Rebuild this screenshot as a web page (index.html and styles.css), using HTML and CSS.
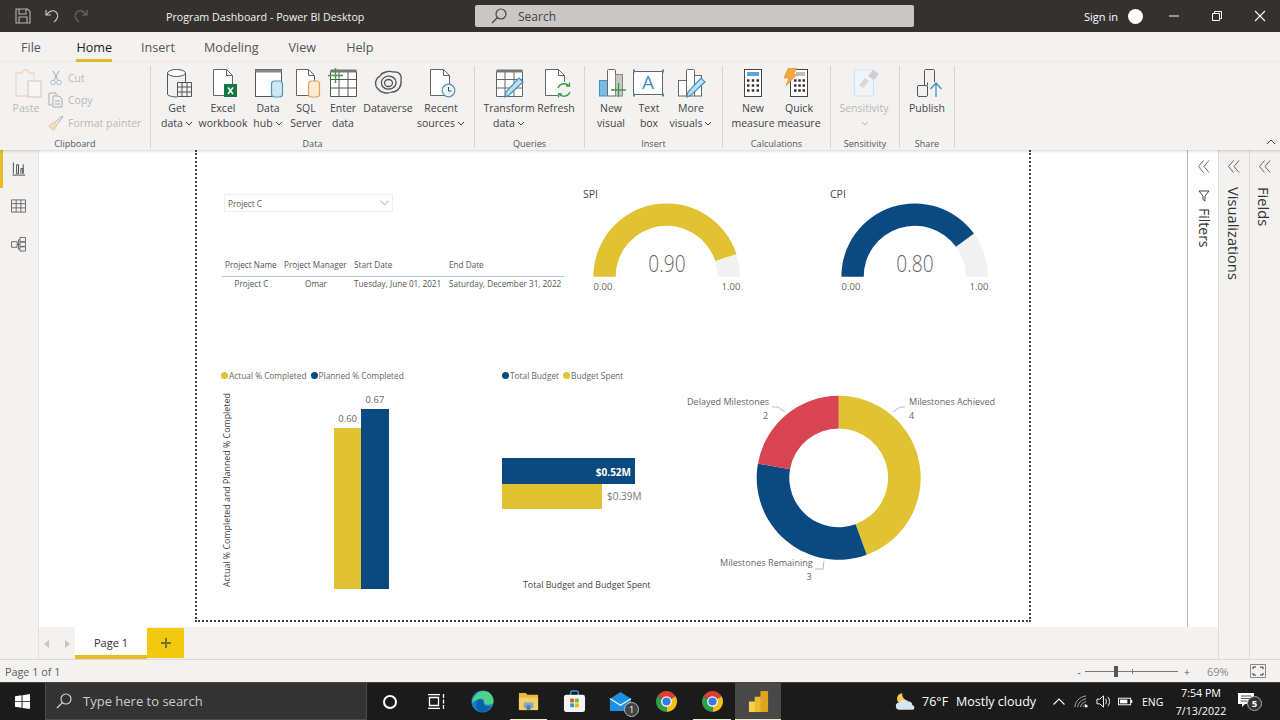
FILE: index.html
```html
<!DOCTYPE html>
<html lang="en">
<head>
<meta charset="utf-8">
<title>Program Dashboard - Power BI Desktop</title>
<link rel="stylesheet" href="styles.css">
</head>
<body>
<div class="app">
  <header class="titlebar">
    <div class="qat">
      <svg class="qicon" viewBox="0 0 16 16"><path d="M1 1h11.5L15 3.5V15H1zM4 1v5h7V1M4 15V9h8v6" fill="none" stroke="#b5b4b2" stroke-width="1.1"/></svg>
      <svg class="qicon" viewBox="0 0 16 16"><path d="M2 2v5h5M2.5 7C5 3 9 1.500 12 4c3 2.800 2 7-2 10" fill="none" stroke="#c8c7c5" stroke-width="1.200"/></svg>
      <svg class="qicon" viewBox="0 0 16 16"><path d="M14 2v5H9M13.500 7C11 3 7 1.500 4 4c-3 2.800-2 7 2 10" fill="none" stroke="#6c6b69" stroke-width="1.200"/></svg>
    </div>
    <div class="doc-title">Program Dashboard - Power BI Desktop</div>
    <div class="search">
      <svg class="search-ic" viewBox="0 0 16 16"><circle cx="10" cy="6" r="5" fill="none" stroke="#444" stroke-width="1.200"/><path d="M6.500 9.500L1 15" stroke="#444" stroke-width="1.200"/></svg>
      <span>Search</span>
    </div>
    <div class="account"><span>Sign in</span><i class="avatar"></i></div>
    <div class="winbtns">
      <svg class="wb" viewBox="0 0 12 12"><path d="M1 6h10" stroke="#fff"/></svg>
      <svg class="wb" viewBox="0 0 12 12"><path d="M1.500 3.500h7v7h-7zM3.500 3.500v-2h7v7h-2" fill="none" stroke="#fff"/></svg>
      <svg class="wb" viewBox="0 0 12 12"><path d="M1 1l10 10M11 1L1 11" stroke="#fff" stroke-width="1.100"/></svg>
    </div>
  </header>

  <nav class="tabs">
    <span class="tab">File</span>
    <span class="tab active">Home</span>
    <span class="tab">Insert</span>
    <span class="tab">Modeling</span>
    <span class="tab">View</span>
    <span class="tab">Help</span>
  </nav>

  <section class="ribbon">
    <div class="group g-clip">
      <div class="btns">
        <div class="rb w34 off">
          <svg class="ic" viewBox="0 0 34 30"><path d="M7 5h6l2-3h3l2 3h5v7M19 28H7V5" fill="none" stroke="#f0d8bd" stroke-width="1.300"/><rect x="19" y="13" width="13" height="16" fill="#f7f6f5" stroke="#c9c8c6"/></svg>
          <span>Paste</span>
        </div>
        <div class="small-list off">
          <div class="si"><svg class="sic" viewBox="0 0 16 16"><path d="M5 1l5 9M11 1L6 10" stroke="#aaa" fill="none"/><circle cx="5" cy="12.500" r="2.300" fill="none" stroke="#a8c4da"/><circle cx="11" cy="12.500" r="2.300" fill="none" stroke="#a8c4da"/></svg><span>Cut</span></div>
          <div class="si"><svg class="sic" viewBox="0 0 16 16"><path d="M1 1h7v2M1 1v12h3" fill="none" stroke="#aaa"/><path d="M5 4h6l3 3v8H5zM7 9h5M7 12h5" fill="none" stroke="#aaa"/></svg><span>Copy</span></div>
          <div class="si"><svg class="sic" viewBox="0 0 16 16"><path d="M1 11l5-4 3 3-3 5c-2 0-4-2-5-4z" fill="#f3dcc0" stroke="#e4c7a4"/><path d="M7 7l7-6 1 1-6 7" fill="none" stroke="#aaa"/></svg><span>Format painter</span></div>
        </div>
      </div>
      <div class="glabel">Clipboard</div>
    </div>

    <div class="group g-data">
      <div class="btns">
        <div class="rb w46">
          <svg class="ic" viewBox="0 0 34 30"><ellipse cx="16.500" cy="5" rx="9" ry="3.500" fill="#fff" stroke="#555"/><path d="M7.500 5v21c0 1.500 4 3 9.500 3M25.500 5v9" fill="none" stroke="#555"/><path d="M17.500 14.500h14v14h-14zM17.500 19h14M17.500 24h14M22 14.500v14M27 14.500v14" fill="#f3f2f1" stroke="#555"/></svg>
          <span>Get</span><span>data<svg class="chev" viewBox="0 0 8 5"><path d="M1 1l3 3 3-3" fill="none" stroke="#444"/></svg></span>
        </div>
        <div class="rb w46">
          <svg class="ic" viewBox="0 0 34 30"><path d="M7.500 1.500h13l6 6v20h-19z" fill="#fff" stroke="#666"/><path d="M20.500 1.500v6h6" fill="none" stroke="#666"/><rect x="18" y="16" width="13" height="13" fill="#117a43"/><path d="M22 19.500l5 6.500M27 19.500L22 26" stroke="#fff" stroke-width="1.500"/></svg>
          <span>Excel</span><span>workbook</span>
        </div>
        <div class="rb w44">
          <svg class="ic" viewBox="0 0 34 30"><rect x="4.500" y="1.500" width="26" height="27" fill="#fff" stroke="#555"/><rect x="4.500" y="1.500" width="26" height="3" fill="#888"/><rect x="20.500" y="13" width="11" height="16" rx="3" fill="#cfe6f3" stroke="#4e97bf" stroke-width="1.200"/></svg>
          <span>Data</span><span>hub<svg class="chev" viewBox="0 0 8 5"><path d="M1 1l3 3 3-3" fill="none" stroke="#444"/></svg></span>
        </div>
        <div class="rb w32">
          <svg class="ic" viewBox="0 0 34 30"><path d="M7.500 1.500h12l6 6v20h-18z" fill="#fff" stroke="#666"/><path d="M19.500 1.500v6h6" fill="none" stroke="#666"/><rect x="19.500" y="13" width="11" height="16" rx="3" fill="#fbe9d6" stroke="#e5a15c" stroke-width="1.200"/></svg>
          <span>SQL</span><span>Server</span>
        </div>
        <div class="rb w42">
          <svg class="ic" viewBox="0 0 34 30"><path d="M4.500 3.500h26v25h-26zM4.500 11.500h26M4.500 20h26M13 3.500v25M22 3.500v25" fill="#fff" stroke="#555"/><rect x="4.500" y="1.500" width="26" height="3" fill="#777"/><path d="M2 7.500h15M9.500 0v15" stroke="#3d9a4b" stroke-width="1.500"/></svg>
          <span>Enter</span><span>data</span>
        </div>
        <div class="rb w48">
          <svg class="ic" viewBox="0 0 34 30"><path d="M9 8c3-5 10-5 13-4 6-1 9 3 8 8 1 6-3 12-9 12-5 2-11 1-14-3-4-4-3-10 2-13z" fill="none" stroke="#555" stroke-width="1.300"/><path d="M11 12c3-5 10-5 13-1 3 5-1 10-6 10-5 1-9-4-7-9z" fill="none" stroke="#555" stroke-width="1.300"/><ellipse cx="17.500" cy="15" rx="4" ry="3.500" fill="none" stroke="#555" stroke-width="1.300"/></svg>
          <span>Dataverse</span>
        </div>
        <div class="rb w58">
          <svg class="ic" viewBox="0 0 34 30"><path d="M6.500 1.500h13l6 6v20h-19z" fill="#fff" stroke="#666"/><path d="M19.500 1.500v6h6" fill="none" stroke="#666"/><circle cx="24.500" cy="22.500" r="6.300" fill="#eaf4fa" stroke="#4e97bf" stroke-width="1.200"/><path d="M24.500 19v4h3" fill="none" stroke="#444"/></svg>
          <span>Recent</span><span>sources<svg class="chev" viewBox="0 0 8 5"><path d="M1 1l3 3 3-3" fill="none" stroke="#444"/></svg></span>
        </div>
      </div>
      <div class="glabel">Data</div>
    </div>

    <div class="group g-query">
      <div class="btns">
        <div class="rb w62">
          <svg class="ic" viewBox="0 0 34 30"><path d="M4.500 3.500h26v25h-26zM4.500 11.500h26M4.500 20h26M13 3.500v25M22 3.500v25" fill="#fff" stroke="#666"/><rect x="4.500" y="1.500" width="26" height="3" fill="#777"/><path d="M13 29l1-5L27 10l4 4-14 13z" fill="#bfe0f2" stroke="#3f8fc0" stroke-width="1.200"/></svg>
          <span>Transform</span><span>data<svg class="chev" viewBox="0 0 8 5"><path d="M1 1l3 3 3-3" fill="none" stroke="#444"/></svg></span>
        </div>
        <div class="rb w32">
          <svg class="ic" viewBox="0 0 34 30"><path d="M6.500 1.500h13l6 6v20h-19z" fill="#fff" stroke="#666"/><path d="M19.500 1.500v6h6" fill="none" stroke="#666"/><circle cx="25" cy="22" r="8.500" fill="#f3f2f1"/><path d="M19 20a6.500 6.500 0 0 1 11-2M31 24a6.500 6.500 0 0 1-11 2M30.500 14.500V18h-3.500M19.500 29.500V26h3.500" fill="none" stroke="#3d9a4b" stroke-width="1.300"/></svg>
          <span>Refresh</span>
        </div>
      </div>
      <div class="glabel">Queries</div>
    </div>

    <div class="group g-insert">
      <div class="btns">
        <div class="rb w42">
          <svg class="ic" viewBox="0 0 34 30"><rect x="5.500" y="12.500" width="8" height="15.500" fill="#7db9e0" stroke="#3f8fc0"/><rect x="13.500" y="1.500" width="8" height="26.500" rx="1" fill="#fff" stroke="#666"/><rect x="21.500" y="6.500" width="7" height="21.500" fill="#c8c7c5" stroke="#8a8886"/><path d="M17 22h15M24.500 15v14" stroke="#3d9a4b" stroke-width="1.300"/></svg>
          <span>New</span><span>visual</span>
        </div>
        <div class="rb w34">
          <svg class="ic" viewBox="0 0 34 30"><rect x="1.500" y="3.500" width="29" height="23" fill="#fff" stroke="#666"/><path d="M1 3h2M30 3h2M1 27h2M30 27h2" stroke="#3f8fc0" stroke-width="3"/><text class="svg-a" x="16" y="21">A</text></svg>
          <span>Text</span><span>box</span>
        </div>
        <div class="rb w50">
          <svg class="ic" viewBox="0 0 34 30"><rect x="4.500" y="12.500" width="8" height="15.500" fill="#fff" stroke="#666"/><rect x="12.500" y="1.500" width="8" height="26.500" rx="1" fill="#fff" stroke="#666"/><rect x="20.500" y="7.500" width="7" height="20.500" fill="#fff" stroke="#666"/><path d="M13 29l1-5L27 10l4 4-14 13z" fill="#bfe0f2" stroke="#3f8fc0" stroke-width="1.200"/></svg>
          <span>More</span><span>visuals<svg class="chev" viewBox="0 0 8 5"><path d="M1 1l3 3 3-3" fill="none" stroke="#444"/></svg></span>
        </div>
      </div>
      <div class="glabel">Insert</div>
    </div>

    <div class="group g-calc">
      <div class="btns">
        <div class="rb w48">
          <svg class="ic" viewBox="0 0 34 30"><rect x="8.500" y="1.500" width="17" height="27" fill="#fff" stroke="#444"/><rect x="11" y="4" width="12" height="4" fill="#5ba6d8"/><path d="M11 12.500h12M11 17.500h12M11 22.500h12" stroke="#333" stroke-width="2.500" stroke-dasharray="2.500 2.250"/></svg>
          <span>New</span><span>measure</span>
        </div>
        <div class="rb w44">
          <svg class="ic" viewBox="0 0 34 30"><rect x="8.500" y="1.500" width="17" height="27" fill="#fff" stroke="#444"/><rect x="14" y="4" width="9" height="4" fill="#bbb"/><path d="M12 12.500h11M12 17.500h11M12 22.500h11" stroke="#333" stroke-width="2.500" stroke-dasharray="2.500 1.800"/><path d="M6 .5h9l-4 6h4L4 18l3-8H2z" fill="#f4a93a" stroke="#d68a1c" stroke-width=".6"/></svg>
          <span>Quick</span><span>measure</span>
        </div>
      </div>
      <div class="glabel">Calculations</div>
    </div>

    <div class="group g-sens">
      <div class="btns">
        <div class="rb w66 off">
          <svg class="ic" viewBox="0 0 34 30"><path d="M7.500 2h19v26h-19z" fill="#eef6fb" stroke="#cfe3f0" stroke-width="1.200"/><path d="M12 17l6-7 4 3-6 7z" fill="#d8d8d8"/><path d="M21 8l5-6 6 4-5 6z" fill="#cfcfcf"/></svg>
          <span>Sensitivity</span><span class="lonechev"><svg class="chev" viewBox="0 0 8 5"><path d="M1 1l3 3 3-3" fill="none" stroke="#b5b4b2"/></svg></span>
        </div>
      </div>
      <div class="glabel">Sensitivity</div>
    </div>

    <div class="group g-share">
      <div class="btns">
        <div class="rb w54">
          <svg class="ic" viewBox="0 0 34 30"><path d="M14.500 17V2.500a1 1 0 0 1 1-1h8a1 1 0 0 1 1 1V14" fill="none" stroke="#555"/><rect x="7.500" y="17.500" width="10" height="11" rx="1.500" fill="none" stroke="#555"/><path d="M17.500 17.500v-3" stroke="#555"/><path d="M26 29V16M20.500 21L26 15l5.500 6" fill="none" stroke="#3f8fc0" stroke-width="1.300"/></svg>
          <span>Publish</span>
        </div>
      </div>
      <div class="glabel">Share</div>
    </div>
    <svg class="collapse" viewBox="0 0 10 6"><path d="M1 5l4-4 4 4" fill="none" stroke="#444"/></svg>
  </section>

  <main class="workspace">
    <aside class="rail">
      <div class="rail-btn current"><svg class="rail-ic" viewBox="0 0 16 16"><path d="M2.500 1v12M6 6v7h2V3.500H6V6M10.500 13V7.500h2V13M13 3v10M1.500 14.500H15" fill="none" stroke="#444"/></svg></div>
      <div class="rail-btn"><svg class="rail-ic" viewBox="0 0 16 16"><path d="M.5 1.500h15v13H.5zM.5 5.500h15M.5 10h15M5.500 1.500v13M10.500 1.500v13" fill="none" stroke="#666"/></svg></div>
      <div class="rail-btn"><svg class="rail-ic" viewBox="0 0 16 16"><path d="M.5 5.500h6v6h-6zM9.500 1h6v4.500h-6zM9.500 6h6v4.500h-6zM9.500 11h6v4.500h-6zM6.500 8.500h3M8 3.500v10h1.500M8 3.500h1.500" fill="none" stroke="#666"/></svg></div>
    </aside>

    <div class="center">
      <div class="canvas-row">
        <div class="canvas">
          <div class="report">
            <div class="slicer"><span>Project C</span><svg class="slicer-chev" viewBox="0 0 10 6"><path d="M.5 .5L5 5l4.500-4.500" fill="none" stroke="#999"/></svg></div>

            <div class="table">
              <div class="th">Project Name</div><div class="th">Project Manager</div><div class="th">Start Date</div><div class="th">End Date</div>
              <div class="td mid">Project C</div><div class="td mid">Omar</div><div class="td">Tuesday, June 01, 2021</div><div class="td">Saturday, December 31, 2022</div>
            </div>

            <div class="gtitle spi-t">SPI</div>
            <div class="gauge spi">
              <svg class="gauge-svg" viewBox="0 0 154 80"><path d="M146.400 54.050A73.300 73.300 0 0 1 150 76.700H127.700A51 51 0 0 0 125.200 60.940Z" fill="#f1f1f1"/><path d="M3.400 76.700A73.300 73.300 0 0 1 146.400 54.050L125.200 60.940A51 51 0 0 0 25.700 76.700Z" fill="#e1c233"/></svg>
              <div class="gval">0.90</div><div class="gmin">0.00</div><div class="gmax">1.00</div>
            </div>

            <div class="gtitle cpi-t">CPI</div>
            <div class="gauge cpi">
              <svg class="gauge-svg" viewBox="0 0 154 80"><path d="M136 33.600A73.300 73.300 0 0 1 150 76.700H127.700A51 51 0 0 0 117.960 46.700Z" fill="#f1f1f1"/><path d="M3.400 76.700A73.300 73.300 0 0 1 136 33.600L117.960 46.700A51 51 0 0 0 25.700 76.700Z" fill="#0b4a80"/></svg>
              <div class="gval">0.80</div><div class="gmin">0.00</div><div class="gmax">1.00</div>
            </div>

            <div class="legend lg1"><i class="dot yellow"></i><span>Actual % Completed</span><i class="dot blue"></i><span>Planned % Completed</span></div>
            <div class="axis-y">Actual % Completed and Planned % Completed</div>
            <div class="columns">
              <div class="col"><span class="vlabel">0.60</span><i class="colbar c60"></i></div>
              <div class="col"><span class="vlabel">0.67</span><i class="colbar c67"></i></div>
            </div>

            <div class="legend lg2"><i class="dot blue"></i><span>Total Budget</span><i class="dot yellow"></i><span>Budget Spent</span></div>
            <div class="hbars">
              <div class="hbar total"><span>$0.52M</span></div>
              <div class="hrow"><div class="hbar spent"></div><span class="hout">$0.39M</span></div>
            </div>
            <div class="axis-x">Total Budget and Budget Spent</div>

            <svg class="donut" viewBox="0 0 180 185">
              <path d="M88.700 5.800A82 82 0 0 1 116.750 164.850L105.600 134.200A49.400 49.400 0 0 0 88.700 38.400Z" fill="#e1c233"/>
              <path d="M116.750 164.850A82 82 0 0 1 7.950 73.560L40.050 79.220A49.400 49.400 0 0 0 105.600 134.200Z" fill="#0b4a80"/>
              <path d="M7.950 73.560A82 82 0 0 1 88.700 5.800V38.400A49.400 49.400 0 0 0 40.050 79.220Z" fill="#d94452"/>
              <path d="M143 22l7-5h5M35 22l-7-5h-6M65 179h8l1-8" fill="none" stroke="#bbb"/>
            </svg>
            <div class="dl dl-a"><span>Milestones Achieved</span><span>4</span></div>
            <div class="dl dl-d"><span>Delayed Milestones</span><span>2</span></div>
            <div class="dl dl-r"><span>Milestones Remaining</span><span>3</span></div>
          </div>
        </div>
        <aside class="filters">
          <svg class="dbl" viewBox="0 0 12 13"><path d="M5.500 .5l-5 6 5 6M11 .5l-5 6 5 6" fill="none" stroke="#666"/></svg>
          <div class="filter-v">
            <svg class="funnel" viewBox="0 0 12 12"><path d="M1 1h10L7 6v5L5 9.500V6z" fill="none" stroke="#444"/></svg>
            <span class="vtext">Filters</span>
          </div>
        </aside>
      </div>
      <div class="pagebar">
        <div class="pager"><svg class="arrow" viewBox="0 0 6 8"><path d="M5 0v8L0 4z" fill="#c8c6c4"/></svg><svg class="arrow" viewBox="0 0 6 8"><path d="M1 0v8l5-4z" fill="#c8c6c4"/></svg></div>
        <div class="pagetab">Page 1</div>
        <div class="addpage"><svg class="plus" viewBox="0 0 10 10"><path d="M5 0v10M0 5h10" stroke="#7d6f2a" stroke-width="2"/></svg></div>
      </div>
    </div>

    <aside class="pane">
      <svg class="dbl" viewBox="0 0 12 13"><path d="M5.500 .5l-5 6 5 6M11 .5l-5 6 5 6" fill="none" stroke="#666"/></svg>
      <span class="vtext">Visualizations</span>
    </aside>
    <aside class="pane">
      <svg class="dbl" viewBox="0 0 12 13"><path d="M5.500 .5l-5 6 5 6M11 .5l-5 6 5 6" fill="none" stroke="#666"/></svg>
      <span class="vtext last">Fields</span>
    </aside>
  </main>

  <footer class="status">
    <span class="pagecount">Page 1 of 1</span>
    <div class="zoom">
      <span class="zm">-</span>
      <div class="slider"><i class="thumb"></i><i class="tick"></i></div>
      <span class="zm">+</span>
      <span class="pct">69%</span>
      <svg class="fit" viewBox="0 0 16 14"><path d="M.5 .5h15v13H.5z" fill="none" stroke="#8a8886"/><path d="M3 5V3h3M13 5V3h-3M3 9v2h3M13 9v2h-3" fill="none" stroke="#333"/></svg>
    </div>
  </footer>

  <div class="taskbar">
    <div class="start"><svg class="winlogo" viewBox="0 0 16 16"><path d="M0 2.300L7 1.300V7.600H0zM8 1.200L16 0V7.600H8zM0 8.500H7V14.700L0 13.700zM8 8.500H16V16L8 14.800z" fill="#fff"/></svg></div>
    <div class="tsearch">
      <svg class="tsearch-ic" viewBox="0 0 16 16"><circle cx="10" cy="6" r="5" fill="none" stroke="#ddd" stroke-width="1.100"/><path d="M6.500 9.500L1 15" stroke="#ddd" stroke-width="1.100"/></svg>
      <span>Type here to search</span>
    </div>
    <div class="cell"><i class="cortana"></i></div>
    <div class="cell"><svg class="tv" viewBox="0 0 17 15"><path d="M0 .5h12M0 14.500h12M1.500 3.500h9v8h-9zM15.500 0v4M15.500 5.500v4M15.500 11v4" fill="none" stroke="#fff" stroke-width="1.300"/></svg></div>
    <div class="cell"><svg class="tk" viewBox="0 0 24 24"><circle cx="12" cy="12" r="11.500" fill="#1c7fc4"/><path d="M1 13C2 6 8 1 13 1c6 0 11 5 10.500 11 0 2-2 3.500-5 3.500-3 0-5-1-5-3 1-2-2-4-5-3-4 1-6 3-7.500 4z" fill="#4fd18a"/><path d="M7 11c3-2 6-1 6 2 0 4 4 5 8 4-2 4-6 6-10 6C5 22 4 15 7 11z" fill="#0c5fa8"/></svg></div>
    <div class="cell"><svg class="tk" viewBox="0 0 24 24"><path d="M2 3h7l2 2h11v15H2z" fill="#e8b93b"/><path d="M2 8h20v13H2z" fill="#f3cf6a"/><path d="M7 13h10v6H7z" fill="#7fa9c9"/><path d="M10 16h4v5h-4z" fill="#4a7ea8"/></svg></div>
    <div class="cell"><svg class="tk" viewBox="0 0 24 24"><path d="M8 6V3a2 2 0 0 1 2-2h4a2 2 0 0 1 2 2v3" fill="none" stroke="#3a96dd" stroke-width="1.500"/><rect x="1" y="5" width="22" height="18" rx="2.500" fill="#f4f4f4"/><rect x="7.500" y="9" width="4" height="4" fill="#e8562a"/><rect x="12.500" y="9" width="4" height="4" fill="#7cb82f"/><rect x="7.500" y="14" width="4" height="4" fill="#1f9bde"/><rect x="12.500" y="14" width="4" height="4" fill="#f4b400"/></svg></div>
    <div class="cell mail"><svg class="tk" viewBox="0 0 24 24"><path d="M1 9L12 2l11 7v13H1z" fill="#1f8fe0"/><path d="M1 9l11 7 11-7" fill="none" stroke="#fff" stroke-width="1.200"/></svg><span class="mailbadge">1</span></div>
    <div class="cell"><svg class="tk" viewBox="0 0 24 24"><path d="M12 12L2.500 6.500A11 11 0 0 1 21.500 6.500Z" fill="#d93f33"/><path d="M12 12L21.500 6.500A11 11 0 0 1 12 23Z" fill="#f2c019"/><path d="M12 12V23A11 11 0 0 1 2.500 6.500Z" fill="#2f9e4f"/><circle cx="12" cy="12" r="5.600" fill="#fff"/><circle cx="12" cy="12" r="4.300" fill="#3b78e7"/></svg></div>
    <div class="cell"><svg class="tk" viewBox="0 0 24 24"><path d="M12 12L2.500 6.500A11 11 0 0 1 21.500 6.500Z" fill="#d93f33"/><path d="M12 12L21.500 6.500A11 11 0 0 1 12 23Z" fill="#f2c019"/><path d="M12 12V23A11 11 0 0 1 2.500 6.500Z" fill="#2f9e4f"/><circle cx="12" cy="12" r="5.600" fill="#fff"/><circle cx="12" cy="12" r="4.300" fill="#3b78e7"/></svg></div>
    <div class="cell pbi"><svg class="tk" viewBox="0 0 24 24"><rect x="2" y="12" width="7" height="11" fill="#f6d04d"/><rect x="8" y="7" width="8" height="16" fill="#eeb92f"/><rect x="14" y="1" width="8" height="22" rx="1" fill="#dfa41e"/></svg></div>
    <div class="tray">
      <svg class="weather" viewBox="0 0 24 20"><path d="M9 1a6 6 0 1 0 6 8 7 7 0 0 1-6-8z" fill="#f6c945"/><path d="M6 19a4 4 0 0 1 0-8c1-3 6-4 8-1 4-1 6 2 6 4 3 0 3 5 0 5z" fill="#d5e6f2"/></svg>
      <span class="temp">76°F</span>
      <span class="cond">Mostly cloudy</span>
      <svg class="caret" viewBox="0 0 12 7"><path d="M.5 6.500L6 1l5.500 5.500" fill="none" stroke="#fff" stroke-width="1.100"/></svg>
      <svg class="trayic" viewBox="0 0 16 16"><path d="M1 14C1 8 6 3 13 2M4 14c0-4 4-8 9-9M7 14c0-3 3-5 6-6M10 14c0-1 1-3 3-3" fill="none" stroke="#bbb" stroke-width=".9"/><circle cx="13" cy="13" r="1.500" fill="#fff"/></svg>
      <svg class="trayic" viewBox="0 0 16 16"><path d="M1 5.500h3L8 2v12L4 10.500H1z" fill="none" stroke="#fff"/><path d="M10 5c1.500 1.500 1.500 4.500 0 6M12.500 3c2.500 2.500 2.500 7.500 0 10" fill="none" stroke="#fff"/></svg>
      <svg class="trayic" viewBox="0 0 16 16"><rect x=".5" y="4.500" width="13" height="7" fill="none" stroke="#fff"/><rect x="2" y="6" width="8" height="4" fill="#fff"/><path d="M14.500 6.500v3" stroke="#fff" stroke-width="1.500"/></svg>
      <span class="lang">ENG</span>
      <div class="clock"><span>7:54 PM</span><span>7/13/2022</span></div>
      <div class="notif"><svg class="notif-ic" viewBox="0 0 16 16"><path d="M0 1h16v11H7l-3 3v-3H0z" fill="#fff"/><path d="M3 4h10M3 6.500h10M3 9h6" stroke="#555"/></svg><span class="notif-n">5</span></div>
    </div>
    <i class="underline u1"></i><i class="underline u2"></i><i class="underline u3"></i>
  </div>
</div>
</body>
</html>
```

FILE: styles.css
```css
* { box-sizing: border-box; }
html, body { margin: 0; padding: 0; height: 100%; overflow: hidden; }
body { font-family: "Open Sans", "Noto Sans", sans-serif; background: #f3f2f1; color: #444; }
i { display: block; }
.app { width: 1280px; height: 720px; display: flex; flex-direction: column; }

/* title bar */
.titlebar { height: 32px; background: #333231; display: flex; align-items: center; position: relative; color: #fff; flex: none; }
.qat { display: flex; gap: 13px; margin-left: 15px; width: 151px; }
.qicon { width: 16px; height: 16px; }
.doc-title { font-size: 10.700px; width: 309px; color: #f3f2f1; white-space: nowrap; padding-top: 2px; }
.search { width: 439px; height: 22px; background: #c9c8c6; border-radius: 2px; display: flex; align-items: center; color: #444; font-size: 12px; padding-left: 16px; gap: 11px; }
.search-ic { width: 16px; height: 16px; }
.account { display: flex; align-items: center; justify-content: space-between; font-size: 11px; margin-left: 170px; width: 59px; white-space: nowrap; }
.avatar { width: 15px; height: 15px; border-radius: 50%; background: #fff; flex: none; }
.winbtns { display: flex; margin-left: 25px; gap: 31px; }
.wb { width: 12px; height: 12px; }

/* tabs */
.tabs { height: 30px; display: flex; gap: 29px; padding-left: 21px; flex: none; }
.tab { font-size: 12.600px; line-height: 31px; height: 30px; color: #555; }
.tab:first-child { margin-right: 6.500px; }
.tab:nth-child(5), .tab:nth-child(6) { margin-left: 1px; }
.tab.active { color: #222; border-bottom: 3px solid #e6bd22; height: 30px; font-weight: 500; }

/* ribbon */
.ribbon { height: 88px; display: flex; padding-top: 4px; position: relative; flex: none; box-shadow: 0 1px 3px rgba(0,0,0,.18); z-index: 2; }
.group { height: 82px; border-right: 1px solid #d6d5d3; display: flex; flex-direction: column; flex: none; padding-top: 2px; }
.btns { display: flex; flex: 1; }
.g-clip { width: 151px; }
.g-clip .btns { padding-left: 9px; }
.g-data { width: 324px; }
.g-data .btns { padding-left: 3px; }
.g-query { width: 110px; }
.g-query .btns { padding-left: 3px; }
.g-insert { width: 138px; }
.g-insert .btns { padding-left: 5px; }
.g-calc { width: 108px; }
.g-calc .btns { padding-left: 6px; }
.g-sens { width: 69px; }
.g-share { width: 55px; }
.glabel { font-size: 9.100px; text-align: center; color: #555; height: 13px; line-height: 13px; margin-bottom: -2px; }
.rb { display: flex; flex-direction: column; align-items: center; font-size: 10.500px; line-height: 15px; color: #444; white-space: nowrap; flex: none; }
.rb .ic { margin-bottom: 3px; }
.ic { width: 34px; height: 30px; flex: none; }
.w32 { width: 32px; } .w34 { width: 34px; } .w42 { width: 42px; } .w44 { width: 44px; } .w46 { width: 46px; }
.w48 { width: 48px; } .w50 { width: 50px; } .w54 { width: 54px; } .w58 { width: 58px; } .w62 { width: 62px; } .w66 { width: 66px; }
.chev { width: 8px; height: 5px; margin-left: 2px; vertical-align: 1px; }
.off, .off span { color: #b9b8b6; }
.lonechev { height: 15px; }
.small-list { margin-left: 5px; display: flex; flex-direction: column; gap: 3px; }
.si { display: flex; align-items: center; height: 19.500px; font-size: 10.500px; gap: 4px; white-space: nowrap; }
.sic { width: 16px; height: 16px; flex: none; }
.collapse { position: absolute; right: 4px; bottom: 5px; width: 10px; height: 6px; }
.svg-a { font-family: "Open Sans", sans-serif; font-size: 19px; fill: #3f8fc0; text-anchor: middle; }

/* workspace */
.workspace { flex: 1; display: flex; min-height: 0; }
.rail { width: 39px; border-right: 1px solid #e3e2e0; flex: none; }
.rail-btn { height: 37.500px; display: flex; align-items: center; justify-content: center; padding-right: 1px; }
.rail-btn.current { box-shadow: inset 3px 0 0 #e6bd22; }
.rail-ic { width: 15px; height: 16px; }
.center { flex: 1; display: flex; flex-direction: column; min-width: 0; }
.canvas-row { height: 477px; display: flex; flex: none; }
.canvas { flex: 1; background: #fff; min-width: 0; }
.report { position: relative; margin-left: 156px; width: 836px; height: 472px; border: 2px dotted #444; border-top: 0; }
.filters { width: 31px; background: #fff; border-left: 1px solid #b5b4b2; display: flex; flex-direction: column; align-items: center; flex: none; padding-left: 2px; }
.pane { width: 31px; border-left: 1px solid #dddcda; display: flex; flex-direction: column; align-items: center; flex: none; }
.dbl { width: 12px; height: 13px; margin-top: 10px; flex: none; }
.vtext { writing-mode: vertical-rl; font-size: 14.700px; line-height: 16px; color: #333; margin-top: 14px; white-space: nowrap; }
.vtext.last { margin-right: 3px; }
.filter-v { display: flex; flex-direction: column; align-items: center; margin-top: 17px; }
.filter-v .vtext { margin-top: 6px; font-size: 14px; }
.funnel { width: 12px; height: 12px; }

/* page tabs */
.pagebar { flex: 1; display: flex; align-items: flex-start; }
.pager { width: 36px; display: flex; gap: 14px; padding: 13px 0 0 5px; flex: none; }
.arrow { width: 6px; height: 8px; }
.pagetab { width: 72px; height: 32px; background: #fff; border-bottom: 4px solid #e6bd22; text-align: center; font-size: 11px; line-height: 32px; color: #333; flex: none; }
.addpage { width: 37px; height: 30px; margin-top: 1px; background: #f2c811; display: flex; align-items: center; justify-content: center; flex: none; }
.plus { width: 10px; height: 10px; }

/* status */
.status { height: 23px; border-top: 1px solid #dad9d7; display: flex; align-items: center; justify-content: space-between; padding-left: 5px; flex: none; }
.pagecount { font-size: 10.800px; color: #605e5c; }
.zoom { display: flex; align-items: center; font-size: 11px; color: #605e5c; }
.zm { width: 8px; text-align: center; }
.slider { width: 93px; height: 1px; background: #777; position: relative; margin: 0 5px 0 2px; }
.thumb { position: absolute; left: 29px; top: -5px; width: 4px; height: 11px; background: #555; }
.tick { position: absolute; left: 47px; top: -2px; width: 1px; height: 5px; background: #777; }
.pct { margin-left: 16px; width: 36px; color: #8a8886; }
.fit { width: 16px; height: 14px; margin: 0 14px 0 7px; }

/* taskbar */
.taskbar { height: 38px; background: #1b1b1b; display: flex; align-items: center; flex: none; position: relative; color: #fff; border-top: 1px solid #444; }
.start { width: 45px; display: flex; justify-content: center; flex: none; }
.winlogo { width: 15px; height: 15px; }
.tsearch { width: 322px; height: 37px; background: #333; border: 1px solid #4d4d4d; border-width: 0 1px 1px 1px; display: flex; align-items: center; flex: none; padding-left: 10px; gap: 11px; font-size: 13px; color: #ccc; }
.tsearch-ic { width: 16px; height: 16px; }
.cell { width: 46px; height: 37px; display: flex; align-items: center; justify-content: center; flex: none; position: relative; }
.cortana { width: 14px; height: 14px; border: 2px solid #fff; border-radius: 50%; }
.tv { width: 17px; height: 15px; }
.tk { width: 23px; height: 23px; }
.pbi { background: #484848; }
.mailbadge { position: absolute; left: 27px; top: 19px; width: 15px; height: 15px; border-radius: 50%; background: #444; border: 1px solid #bbb; font-size: 9px; line-height: 13px; text-align: center; color: #fff; }
.tray { margin-left: auto; display: flex; align-items: center; }
.weather { width: 22px; height: 19px; margin-right: 6px; }
.temp { font-size: 12.500px; width: 34px; }
.cond { font-size: 12.500px; width: 97px; white-space: nowrap; }
.caret { width: 12px; height: 7px; margin-right: 9px; }
.trayic { width: 15px; height: 15px; margin-right: 7px; }
.lang { font-size: 10.500px; margin-left: 2px; width: 23px; }
.clock { display: flex; flex-direction: column; align-items: center; font-size: 10.700px; line-height: 18px; width: 72px; }
.notif { width: 43px; position: relative; height: 30px; display: flex; align-items: center; padding-left: 1px; }
.notif-ic { width: 16px; height: 16px; margin-top: -3px; }
.notif-n { position: absolute; left: 10px; top: 9px; width: 15px; height: 15px; border-radius: 50%; background: #333; border: 1px solid #aaa; font-size: 9.500px; line-height: 13px; text-align: center; font-weight: 700; }
.underline { position: absolute; bottom: 0; height: 1px; background: #e2f0d2; }
.u1 { left: 510px; width: 37px; } .u2 { left: 693px; width: 38px; } .u3 { left: 735px; width: 46px; }

/* report visuals: free canvas, origin (197,150) */
.slicer { position: absolute; left: 27px; top: 44px; width: 169px; height: 18px; border: 1px solid #eee; display: flex; align-items: center; justify-content: space-between; padding: 0 3px; font-size: 8.200px; color: #555; }
.slicer-chev { width: 9px; height: 6px; }
.table { position: absolute; left: 25px; top: 108px; width: 342px; display: grid; grid-template-columns: 59px 70px 95px 118px; font-size: 8.200px; color: #555; white-space: nowrap; }
.th { height: 19px; line-height: 14px; padding: 0 0 0 3px; border-bottom: 1px solid #a9c6d6; }
.td { height: 13px; line-height: 13px; padding-left: 3px; }
.td.mid { text-align: center; padding: 0; }
.gtitle { position: absolute; font-size: 10.500px; color: #444; top: 37px; }
.spi-t { left: 386px; } .cpi-t { left: 633px; }
.gauge { position: absolute; top: 50px; width: 154px; height: 100px; }
.spi { left: 393px; } .cpi { left: 641px; }
.gauge-svg { width: 154px; height: 80px; display: block; }
.gval { position: absolute; left: 0; width: 154px; top: 49px; text-align: center; font-family: "Open Sans", sans-serif; font-weight: 300; font-size: 24.500px; line-height: 28px; color: #666; transform: scaleX(.78); }
.gmin, .gmax { position: absolute; top: 80px; font-size: 9.500px; line-height: 14px; color: #666; width: 30px; text-align: center; }
.gmin { left: -2px; } .gmax { left: 126px; }
.legend { position: absolute; top: 219px; display: flex; align-items: center; font-size: 8.300px; height: 12px; color: #666; white-space: nowrap; }
.lg1 { left: 24px; gap: 1px; } .lg2 { left: 305px; gap: 1px; }
.legend .dot { width: 7px; height: 7px; border-radius: 50%; margin-right: 0; flex: none; }
.legend span { margin-right: 3px; }
.yellow { background: #e1c233; } .blue { background: #0b4a80; }
.axis-y { position: absolute; left: 24px; top: 243px; height: 194px; writing-mode: vertical-rl; transform: rotate(180deg); font-size: 8.850px; line-height: 12px; color: #444; text-align: center; white-space: nowrap; }
.columns { position: absolute; left: 137px; top: 239px; height: 200px; display: flex; align-items: flex-end; }
.col { width: 27.300px; display: flex; flex-direction: column; align-items: center; }
.vlabel { font-size: 9.500px; line-height: 15px; margin-bottom: 1.500px; color: #666; }
.colbar { width: 100%; }
.c60 { height: 161.500px; background: #e1c233; }
.c67 { height: 180.500px; background: #0b4a80; }
.hbars { position: absolute; left: 305px; top: 308px; display: flex; flex-direction: column; }
.hbar { height: 25.500px; }
.total { width: 133px; background: #0b4a80; color: #fff; font-size: 10px; font-weight: 700; text-align: right; padding-right: 4px; line-height: 28px; }
.hrow { display: flex; align-items: center; gap: 5.500px; white-space: nowrap; }
.spent { width: 99.500px; background: #e1c233; }
.hout { font-size: 10px; color: #777; }
.axis-x { position: absolute; left: 326px; top: 429px; font-size: 8.800px; line-height: 12px; color: #444; white-space: nowrap; }
.donut { position: absolute; left: 553px; top: 240px; width: 180px; height: 185px; }
.dl { position: absolute; display: flex; flex-direction: column; font-size: 9.050px; line-height: 14px; color: #666; white-space: nowrap; }
.dl-a { left: 712px; top: 245px; }
.dl-a span + span { margin-left: 0; }
.dl-d { left: 490px; top: 245px; }
.dl-d span + span { text-align: right; margin-right: 1px; }
.dl-r { left: 523px; top: 406px; }
.dl-r span + span { text-align: right; margin-right: 1px; }
```
